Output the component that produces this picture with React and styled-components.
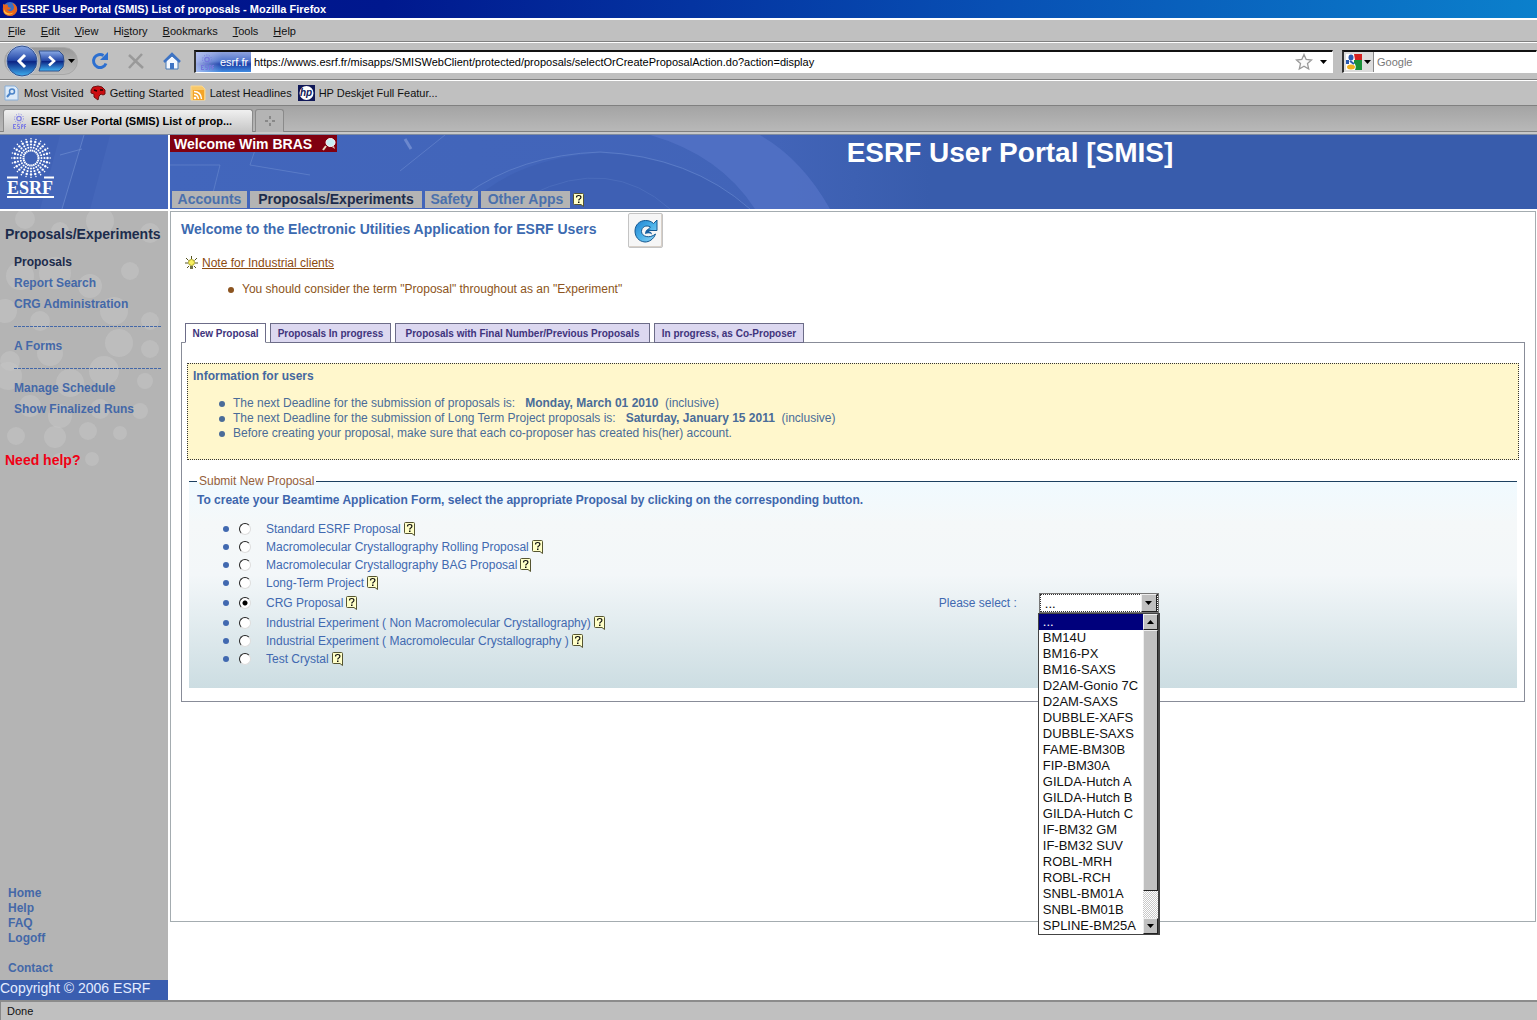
import React, { useState } from "react";
import styled, { createGlobalStyle, css } from "styled-components";

const Global = createGlobalStyle`
  * { box-sizing: border-box; }
  body { margin: 0; background: #fff; font-family: "Liberation Sans", Arial, sans-serif; font-size: 12px; color: #4169b0; }
  ul { list-style: none; margin: 0; padding: 0; }
  button, input, select { font-family: inherit; font-size: inherit; }
  button { border: 0; padding: 0; background: none; color: inherit; }
  a { color: inherit; text-decoration: none; }
  svg { display: block; flex: none; }
  p, h1, h2, h3 { margin: 0; }
`;

const Window = styled.div`
  display: flex;
  flex-direction: column;
  min-height: 100vh;
`;

/* ---------- browser chrome ---------- */

const TitleBar = styled.div`
  display: flex;
  align-items: center;
  gap: 2px;
  height: 18px;
  padding-left: 2px;
  background: linear-gradient(90deg, #00118a 0%, #00188e 25%, #0850b4 65%, #0b80cc 100%);
  color: #fff;
  font-size: 11px;
  font-weight: bold;
  white-space: nowrap;
`;

const bevel = css`
  border-top: 1px solid #fff;
  border-bottom: 1px solid #808080;
  background: #c0c0c0;
  color: #000;
  font-size: 11px;
`;

const MenuBar = styled.nav`
  ${bevel}
  display: flex;
  align-items: center;
  gap: 15px;
  height: 23px;
  margin-top: 1px;
  padding-left: 8px;
`;

const MenuItem = styled.button`
  color: #111;
`;

const NavBar = styled.div`
  ${bevel}
  display: flex;
  align-items: center;
  height: 38px;
  padding-left: 4px;
`;

const HistoryGroup = styled.div`
  display: flex;
  align-items: center;
  width: 74px;
  height: 28px;
  border-radius: 14px;
  background: linear-gradient(#999, #bbb);
  border: 1px solid #a8a8a8;
`;

const IconButton = styled.button`
  display: flex;
  align-items: center;
  justify-content: center;
  width: ${(p) => p.$w || 36}px;
  flex: none;
`;

const NavActions = styled.div`
  display: flex;
  margin-left: 4px;
`;

const Field = styled.div`
  display: flex;
  align-items: center;
  height: 23px;
  background: #fff;
  border: 1px solid #fff;
  border-top: 2px solid #111;
  border-left: 2px solid #333;
  flex: ${(p) => (p.$grow ? 1 : "0 0 195px")};
  margin-left: ${(p) => (p.$grow ? 4 : 9)}px;
  min-width: 0;
`;

const Identity = styled.button`
  display: flex;
  align-items: center;
  gap: 6px;
  height: 20px;
  width: 55px;
  padding-left: 4px;
  background: linear-gradient(90deg, rgba(190, 200, 245, 0.8) 0, rgba(190, 200, 245, 0) 26px),
    linear-gradient(#8fa3dc 0%, #4f74cc 45%, #1b3fa8 60%, #3f8be0 100%);
  color: #fff;
  flex: none;
`;

const AddressInput = styled.input`
  flex: 1;
  min-width: 0;
  height: 20px;
  padding: 0 3px;
  border: 0;
  outline: 0;
  background: transparent;
  color: #000;
  &::placeholder { color: #777; opacity: 1; }
`;

const EngineButton = styled.button`
  display: flex;
  align-items: center;
  justify-content: space-evenly;
  width: 30px;
  height: 20px;
  background: #dcdcdc;
  border-right: 1px solid #888;
  flex: none;
`;

const BookmarkBar = styled.div`
  ${bevel}
  display: flex;
  align-items: center;
  gap: 6px;
  height: 26px;
  padding-left: 4px;
`;

const Bookmark = styled.a`
  display: flex;
  align-items: center;
  gap: 4px;
  color: #111;
  white-space: nowrap;
`;

const TabStrip = styled.div`
  display: flex;
  align-items: flex-end;
  gap: 2px;
  height: 29px;
  padding: 0 0 3px 3px;
  background: linear-gradient(#a4a4a4 0, #b8b8b8 25px, #808080 25px, #808080 26px, #c8c8c8 26px, #c8c8c8 28px, #7f8ba0 28px);
`;

const BrowserTab = styled.button`
  display: flex;
  align-items: center;
  justify-content: ${(p) => (p.$active ? "flex-start" : "center")};
  gap: 5px;
  height: 23px;
  width: ${(p) => p.$w}px;
  padding: 0 8px;
  border: 1px solid #8a8a8a;
  border-bottom: 0;
  border-radius: 3px 3px 0 0;
  background: ${(p) => (p.$active ? "linear-gradient(#f0f0f0, #c6c6c6)" : "#b4b4b4")};
  color: #000;
  font-size: 11px;
  font-weight: bold;
  white-space: nowrap;
`;

const StatusBar = styled.footer`
  display: flex;
  align-items: center;
  height: 20px;
  padding-left: 6px;
  border-top: 2px solid #8c8c8c;
  border-left: 1px solid #888;
  background: #c0c0c0;
  color: #111;
  font-size: 11px;
`;

/* ---------- portal ---------- */

const Portal = styled.div`
  flex: 1;
  display: grid;
  grid-template-columns: 168px minmax(0, 1fr);
  grid-template-rows: 74px 1fr;
  column-gap: 2px;
  row-gap: 2px;
`;

const Backdrop = styled.svg`
  position: absolute;
  inset: 0;
  z-index: 0;
`;

const LogoCell = styled.div`
  position: relative;
  background: #4062b6;
  padding: 2px 0 0 6px;
  overflow: hidden;
  & > svg:last-child { position: relative; }
`;

const Header = styled.header`
  position: relative;
  display: flex;
  flex-direction: column;
  justify-content: space-between;
  background: #385cac;
  overflow: hidden;
`;

const HeaderTop = styled.div`
  position: relative;
  display: flex;
  align-items: flex-start;
`;

const BadgeCell = styled.div`
  width: 313px;
  flex: none;
`;

const Badge = styled.div`
  display: flex;
  align-items: center;
  justify-content: space-between;
  width: 167px;
  height: 17px;
  padding: 0 1px 0 4px;
  background: #800010;
  color: #fff;
  font-size: 14px;
  line-height: 16px;
  font-weight: bold;
`;

const PortalTitle = styled.h1`
  flex: 1;
  text-align: center;
  color: #fff;
  font-size: 28px;
  line-height: 36px;
`;

const AppTabs = styled.nav`
  position: relative;
  display: flex;
  align-items: center;
  gap: 3px;
  padding: 0 0 1px 2px;
`;

const AppTab = styled.a`
  width: ${(p) => p.$w}px;
  height: 17px;
  line-height: 17px;
  text-align: center;
  background: #b4b4b4;
  color: ${(p) => (p.$active ? "#1c2c4c" : "#4a70ac")};
  font-size: 14px;
  font-weight: bold;
`;

const Sidebar = styled.aside`
  position: relative;
  display: flex;
  flex-direction: column;
  background: #b4b4b4;
  font-weight: bold;
  overflow: hidden;
`;

const SideTitle = styled.h2`
  position: relative;
  padding: 14px 0 0 5px;
  font-size: 14px;
  line-height: 18px;
  color: ${(p) => (p.$alert ? "#f00014" : "#1c2c4c")};
`;

const SideList = styled.ul`
  position: relative;
  padding: ${(p) => (p.$compact ? "0 0 4px 8px" : "9px 6px 17px 14px")};
  margin-top: ${(p) => (p.$compact ? "auto" : 0)};
  line-height: ${(p) => (p.$compact ? 15 : 21)}px;
`;

const SideItem = styled.li`
  color: ${(p) => (p.$active ? "#1c2c4c" : "#4468a8")};
  padding-top: ${(p) => (p.$apart ? 15 : 0)}px;
`;

const SideRule = styled.li`
  height: 21px;
  padding-top: 11px;
  &::after {
    content: "";
    display: block;
    height: 1px;
    background: repeating-linear-gradient(90deg, #4468a8 0 3px, transparent 3px 4px);
  }
`;

const Copyright = styled.p`
  background: #3a5eb0;
  color: #e4ecff;
  font-size: 14px;
  line-height: 17px;
  height: 20px;
  font-weight: normal;
`;

const Content = styled.main`
  margin: 0 1px 78px 0;
  padding: 0 10px;
  border: 1px solid #a4acb0;
`;

const WelcomeRow = styled.div`
  display: flex;
  align-items: flex-start;
  gap: 14px;
  height: 36px;
  padding-top: 1px;
`;

const Heading = styled.h2`
  min-width: 433px;
  color: #3c6ab0;
  font-size: 14px;
  line-height: 33px;
`;

const ReloadButton = styled.button`
  display: flex;
  align-items: center;
  justify-content: center;
  width: 35px;
  height: 35px;
  border: 1px solid #c4c4c4;
  border-radius: 2px;
  background: #f6f6f6;
  box-shadow: inset -1px -1px 0 #d8d0c8;
`;

const NoteLink = styled.a`
  display: flex;
  align-items: center;
  gap: 4px;
  padding: 8px 0 0 4px;
  color: #8c4a10;
  line-height: 14px;
  span { text-decoration: underline; }
`;

const Bullets = styled.ul`
  padding: ${(p) => p.$pad};
  line-height: 15px;
  color: ${(p) => p.$color};
`;

const Bullet = styled.li`
  display: flex;
  align-items: center;
  white-space: pre;
  &::before {
    content: "";
    width: 6px;
    height: 6px;
    margin-right: 8px;
    border-radius: 3px;
    background: currentColor;
    flex: none;
  }
`;

const ProposalTabs = styled.div`
  display: flex;
  gap: 4px;
  padding: 26px 0 0 4px;
`;

const ProposalTab = styled.button`
  width: ${(p) => p.$w}px;
  height: 20px;
  margin-bottom: -1px;
  border: 1px solid #6c6c88;
  border-bottom-color: ${(p) => (p.$active ? "#fff" : "#6c6c88")};
  background: ${(p) => (p.$active ? "#fff" : "#dcd8f0")};
  color: #40347c;
  font-size: 10px;
  font-weight: bold;
  white-space: nowrap;
  z-index: 1;
`;

const TabPanel = styled.section`
  padding: 20px 5px 13px;
  border: 1px solid #888c98;
`;

const InfoBox = styled.div`
  height: 97px;
  padding: 5px;
  border: 1px dotted #333;
  background: #fff7cc;
  color: #4468a0;
`;

const InfoTitle = styled.h3`
  font-size: 12px;
  line-height: 15px;
`;

const Submit = styled.fieldset`
  min-width: 0;
  margin: 14px 2px 0;
  padding: 5px 0 20px 8px;
  border: 0;
  border-top: 1px solid #1c4060;
  background: linear-gradient(#f0faff 0, #f5f8f9 20%, #f3f7f9 45%, #ccdde2 100%);
`;

const Legend = styled.legend`
  padding: 0 2px;
  color: #95603a;
  line-height: 14px;
`;

const Lead = styled.p`
  margin-bottom: 12px;
  font-weight: bold;
  line-height: 15px;
  color: #3e66ac;
`;

const Choice = styled.li`
  display: grid;
  grid-template-columns: minmax(0, 749fr) minmax(0, 605fr);
  align-items: center;
  height: ${(p) => (p.$tall ? 22 : 18)}px;
  padding-left: 26px;
`;

const ChoiceMain = styled.div`
  display: flex;
  align-items: center;
  gap: 3px;
  white-space: nowrap;
  &::before {
    content: "";
    width: 6px;
    height: 6px;
    margin-right: 7px;
    border-radius: 3px;
    background: currentColor;
    flex: none;
  }
`;

const ChoiceLabel = styled.label`
  display: flex;
  align-items: center;
  gap: 15px;
`;

const Radio = styled.input.attrs({ type: "radio" })`
  appearance: none;
  width: 12px;
  height: 12px;
  margin: 0;
  border: 1px solid;
  border-color: #222 #ddd #ddd #222;
  border-radius: 6px;
  background: #fff;
  &:checked { background: radial-gradient(circle, #000 0 2px, #fff 3px); }
`;

const SelectArea = styled.div`
  display: flex;
  align-items: center;
`;

const SelectLabel = styled.label`
  width: 100px;
  flex: none;
`;

const Combo = styled.div`
  position: relative;
  width: 120px;
`;

const ComboSelect = styled.select`
  appearance: none;
  display: block;
  width: 120px;
  height: 20px;
  padding: 0 20px 0 5px;
  border: 1px solid #777;
  border-radius: 0;
  outline: 1px dotted #333;
  outline-offset: -2px;
  background: #fff;
  color: #000;
  font-size: 13px;
`;

const Win = css`
  display: flex;
  align-items: center;
  justify-content: center;
  width: 16px;
  border: 1px solid;
  border-color: #eee #222 #222 #eee;
  background: #c0c0c0;
`;

const ComboArrow = styled.span`
  ${Win}
  position: absolute;
  right: 2px;
  top: 1px;
  height: 18px;
  pointer-events: none;
`;

const Popup = styled.div`
  position: absolute;
  z-index: 5;
  top: 20px;
  left: -1px;
  display: flex;
  width: 122px;
  height: 322px;
  border: 1px solid #444;
  border-right-width: 2px;
  background: #fff;
`;

const Options = styled.ul`
  flex: 1;
  overflow: hidden;
  font-size: 13px;
  line-height: 16px;
  color: #111;
`;

const Option = styled.li`
  height: 16px;
  padding-left: 4px;
  white-space: nowrap;
  background: ${(p) => (p.$on ? "#00007c" : "#fff")};
  color: ${(p) => (p.$on ? "#fff" : "#111")};
`;

const ScrollBar = styled.div`
  display: flex;
  flex-direction: column;
  width: 15px;
  background: repeating-conic-gradient(#fff 0 25%, #c8c8c8 0 50%) 0 0 / 2px 2px;
`;

const ScrollButton = styled.button`
  ${Win}
  width: 15px;
  height: 16px;
  flex: none;
`;

const ScrollTrack = styled.div`
  flex: 1;
`;

const ScrollThumb = styled.div`
  height: 261px;
  border: 1px solid;
  border-color: #eee #222 #222 #eee;
  background: #c0c0c0;
`;

/* ---------- drawings ---------- */

const Arrow = ({ up }) => (
  <svg width="7" height="4" viewBox="0 0 7 4" aria-hidden="true">
    <path d={up ? "M0 4h7L3.500 0z" : "M0 0h7L3.500 4z"} fill="#000" />
  </svg>
);

const FirefoxIcon = () => (
  <svg width="16" height="16" viewBox="0 0 16 16">
    <circle cx="8" cy="8" r="7" fill="#3c6fc4" />
    <path d="M1 3c2 1 3 0 5 1-1 2 1 2 3 3-1 2-3 2-4 1 1 3 6 3 7-1 0-2-1-4-2-5 4 1 6 5 5 8-1 3-4 5-7 5-5 0-8-4-7-9z" fill="#e8641c" />
    <path d="M2 7c0 5 6 7 10 4-2 3-8 4-10 0z" fill="#ffc040" />
  </svg>
);

const EsrfIcon = ({ tone = "#8080e4" }) => (
  <svg width="14" height="16" viewBox="0 0 14 16" fill="none" stroke={tone}>
    <circle cx="7" cy="5.500" r="2.200" strokeWidth="1.300" />
    <circle cx="7" cy="5.500" r="4.500" strokeDasharray="1 1.500" />
    <path d="M1.500 11v5M1 11.500h3M1 13.500h2M1 15.500h3M7.500 11.500h-2v2h2v2h-2M9.500 16v-4.500h1.500v2h-1.500M12.500 16v-4.500H14M12.500 13.500H14" />
  </svg>
);

const BackIcon = () => (
  <svg width="34" height="34" viewBox="0 0 34 34">
    <defs>
      <linearGradient id="orb" x1="0" y1="0" x2="0" y2="1">
        <stop offset="0" stopColor="#8cace8" />
        <stop offset=".48" stopColor="#2448a8" />
        <stop offset=".52" stopColor="#0c2484" />
        <stop offset="1" stopColor="#40b4f4" />
      </linearGradient>
    </defs>
    <circle cx="17" cy="17" r="15.500" fill="url(#orb)" stroke="#e0e4f0" />
    <circle cx="17" cy="17" r="15" fill="none" stroke="#31508c" />
    <path d="M20 11l-6 6 6 6" fill="none" stroke="#fff" strokeWidth="3" />
  </svg>
);

const ForwardIcon = () => (
  <svg width="28" height="22" viewBox="0 0 28 22">
    <path d="M1 1h20l4 4q2 6 0 12l-4 4H1q4-10 0-20z" fill="url(#orb)" stroke="#31508c" />
    <path d="M11 6.500l5 4.500-5 4.500" fill="none" stroke="#fff" strokeWidth="2.500" />
  </svg>
);

const ReloadIcon = () => (
  <svg width="20" height="20" viewBox="0 0 20 20">
    <path d="M16 12.500A6.500 6.500 0 1 1 13.500 4.500" fill="none" stroke="#2c6fd0" strokeWidth="3" />
    <path d="M18 1v8h-8z" fill="#2c6fd0" />
  </svg>
);

const StopIcon = () => (
  <svg width="18" height="18" viewBox="0 0 18 18">
    <path d="M2 3l14 13M15 2L2 16" stroke="#999" strokeWidth="2.500" />
  </svg>
);

const HomeIcon = () => (
  <svg width="18" height="18" viewBox="0 0 18 18">
    <path d="M3 9v8h12V9L9 4z" fill="#f4f8ff" stroke="#4478b8" />
    <path d="M1 10l8-8 8 8" fill="none" stroke="#3f74c4" strokeWidth="2.500" />
    <path d="M7 11h4v6H7z" fill="#3f74c4" />
  </svg>
);

const StarIcon = () => (
  <svg width="18" height="18" viewBox="0 0 18 18">
    <path d="M9 1.500l2.200 5 5.300.5-4 3.600 1.200 5.400L9 13.200 4.300 16l1.200-5.400-4-3.600 5.300-.5z" fill="#fafafa" stroke="#999" strokeWidth="1.300" />
  </svg>
);

const GoogleIcon = () => (
  <svg width="16" height="16" viewBox="0 0 16 16">
    <path d="M0 0h16v16H0z" fill="#fff" />
    <path d="M8 0h8v6H9z" fill="#d42020" />
    <path d="M8 6h8v10H9q2-4-1-7z" fill="#189038" />
    <path d="M0 6h3v4H0z" fill="#2858b0" />
    <ellipse cx="5" cy="3.500" rx="2.500" ry="3" fill="#2858b0" />
    <ellipse cx="5" cy="13" rx="4" ry="2.500" fill="#f0b020" />
    <path d="M4 7l4 3" stroke="#2858b0" strokeWidth="2" />
  </svg>
);

const VisitedIcon = () => (
  <svg width="16" height="16" viewBox="0 0 16 16">
    <path d="M1 1h10l3 3v11H1z" fill="#dceaf8" stroke="#88aed8" />
    <circle cx="8" cy="6.500" r="2.500" fill="none" stroke="#4c84c8" strokeWidth="1.500" />
    <path d="M6 8.500L3 12" stroke="#4c84c8" strokeWidth="2" />
  </svg>
);

const StartedIcon = () => (
  <svg width="16" height="16" viewBox="0 0 16 16">
    <path d="M1 5l2-3 5-1 4 1 3 3v4l-2 1-2-1-2 2-1 4-4-3 0-3-3-1z" fill="#cc0c10" stroke="#701010" />
    <path d="M10 5h3M4 5l3 1" stroke="#200" strokeWidth="1.500" />
  </svg>
);

const FeedIcon = () => (
  <svg width="16" height="16" viewBox="0 0 16 16">
    <path d="M1 1h11l3 3v11H1z" fill="#f8c868" stroke="#fcd890" />
    <path d="M3 5h11v10H3z" fill="#f4a428" />
    <circle cx="5" cy="13" r="1.300" fill="#fff" />
    <path d="M4 9.500q4 0 4.500 4.500M4 6.500q7 0 7.500 7.500" stroke="#fff" strokeWidth="1.400" fill="none" />
  </svg>
);

const HpIcon = () => (
  <svg width="17" height="16" viewBox="0 0 17 16">
    <path d="M0 0h17v16H0z" fill="#101858" />
    <circle cx="8.500" cy="8" r="7" fill="#fff" />
    <text x="8" y="11" textAnchor="middle" fontSize="10" fontStyle="italic" fontWeight="bold" fill="#101858">hp</text>
  </svg>
);

const RacketIcon = () => (
  <svg width="14" height="14" viewBox="0 0 14 14">
    <path d="M1 13l3-4" stroke="#e8d8c0" strokeWidth="2" />
    <ellipse cx="8.500" cy="5.500" rx="4.500" ry="4" fill="#c8f0f4" stroke="#fff" />
    <path d="M12 9l1 3-3-2" fill="#e0d0c0" />
  </svg>
);

const BulbIcon = () => (
  <svg width="13" height="14" viewBox="0 0 13 14">
    <path d="M6.500 0v3M1 2l2.500 2.500M12 2L9.500 4.500M0 7h3M13 7h-3M2 12l2-2M11 12l-2-2" stroke="#555420" />
    <circle cx="6.500" cy="6.500" r="3" fill="#f8f060" stroke="#a8a020" />
    <path d="M5 10h3v3H5z" fill="#707048" />
  </svg>
);

const HelpTip = ({ topic }) => (
  <IconButton $w={12} type="button" aria-label={`Help: ${topic}`}>
    <svg width="12" height="14" viewBox="0 0 12 14">
      <path d="M1.500.500h8q1 0 1 1v12l-2.500-2h-6.500q-1 0-1-1v-9q0-1 1-1z" fill="#ffffc8" stroke="#555430" />
      <path d="M3.500 4.500q0-2 2.200-2t2.200 1.800q0 1.200-1.200 1.700-.9.400-.9 1.600" fill="none" stroke="#111" strokeWidth="1.200" />
      <path d="M5 8.500h1.500V10H5z" fill="#111" />
    </svg>
  </IconButton>
);

const RefreshArt = () => (
  <svg width="26" height="26" viewBox="0 0 26 26">
    <defs>
      <linearGradient id="swirl" x1="0" y1="0" x2="1" y2="1">
        <stop offset="0" stopColor="#2080d0" />
        <stop offset=".5" stopColor="#48b0e8" />
        <stop offset="1" stopColor="#98d8f8" />
      </linearGradient>
    </defs>
    <path d="M24 2v10.500H14l3.500-3.500C13 6.500 8.500 9 8.500 13.500c0 5 8 7.500 14 2.500-2 5.500-6.500 8-10.500 8C5.500 23.500 2 18.500 2 13 2 7 6.500 2.500 12.500 2.500c3.500 0 6 1 8 3z" fill="url(#swirl)" stroke="#145890" />
    <path d="M12 16c0-4 3-6 6-4l-2 1.500c1.500 0 3 1 3 3-2-1.500-4-1.500-7-.5z" fill="#1860a0" />
  </svg>
);

const spokes = Array.from({ length: 24 }, (_, i) => (i * Math.PI) / 12);

const EsrfLogo = () => (
  <svg width="50" height="62" viewBox="0 0 50 62" role="img" aria-label="ESRF">
    <circle cx="25" cy="21" r="7.500" fill="none" stroke="#fff" strokeWidth="2" strokeDasharray="1.500 .5" />
    {spokes.map((a) =>
      [10.5, 13.5, 16.5, 19.2].map((r, k) => (
        <circle
          key={`${a}-${r}`}
          cx={25 + r * Math.cos(a)}
          cy={21 + r * Math.sin(a)}
          r={[1, 1.1, 1.2, 0.8][k]}
          fill="#fff"
        />
      ))
    )}
    <path d="M1 40.500h11M38 40.500h10M1 60h47" stroke="#fff" strokeWidth="2" />
    <text x="1" y="57" fontFamily="Liberation Serif, serif" fontSize="18" fontWeight="bold" fill="#fff">ESRF</text>
  </svg>
);

const LogoArt = () => (
  <Backdrop width="168" height="74" viewBox="0 0 168 74" aria-hidden="true">
    <path d="M60 0h24L62 74H40zM110 0h58v74H90z" fill="#4a6cbe" opacity=".5" />
    <path d="M84 0L62 74M60 20l22-6" stroke="#6c8cd0" fill="none" opacity=".7" />
  </Backdrop>
);

const HeaderArt = () => (
  <Backdrop width="760" height="74" viewBox="0 0 760 74" aria-hidden="true">
    <defs>
      <linearGradient id="fade" x1="0" x2="1">
        <stop offset="0" stopColor="#4266bc" />
        <stop offset=".8" stopColor="#4264b8" />
        <stop offset="1" stopColor="#385cac" />
      </linearGradient>
    </defs>
    <path d="M0 0h760v74H0z" fill="url(#fade)" />
    <path d="M295 74Q340 24 430 18q90 4 150 56z" fill="#3e60b4" />
    <path d="M590 0q42 24 70 74h-75Q550 20 480 0z" fill="#5272c6" opacity=".8" />
    <path d="M360 60Q440 20 500 74" fill="none" stroke="#4a6cbc" />
    <path d="M230 36L275 0M0 30h50l-10 40M90 0l-10 30 60 10M295 60Q350 20 430 17q90 4 150 57" fill="none" stroke="#6484cc" opacity=".7" />
    <path d="M235 4l6 10" stroke="#88a0dc" strokeWidth="3" opacity=".6" />
  </Backdrop>
);

const dots = [
  [25, 8, 10], [60, 20, 9], [100, 10, 14], [150, 22, 10], [20, 65, 14], [55, 62, 16], [90, 75, 12], [130, 60, 9],
  [5, 100, 12], [40, 110, 10], [114, 100, 14], [150, 110, 9], [10, 150, 10], [50, 142, 13], [119, 132, 14], [150, 138, 9],
  [8, 165, 14], [104, 160, 15], [70, 172, 14], [145, 170, 8], [30, 195, 11], [60, 205, 12], [100, 198, 10], [140, 200, 8],
  [16, 225, 9], [55, 226, 11], [88, 220, 9], [120, 222, 7], [60, 250, 8], [92, 248, 7],
];

const DotsArt = () => (
  <Backdrop width="168" height="270" viewBox="0 0 168 270" aria-hidden="true">
    {dots.map(([x, y, r]) => (
      <circle key={`${x}-${y}`} cx={x} cy={y} r={r} fill="#c4c4c4" opacity=".55" />
    ))}
  </Backdrop>
);

/* ---------- data ---------- */

const menus = [["", "F", "ile"], ["", "E", "dit"], ["", "V", "iew"], ["Hi", "s", "tory"], ["", "B", "ookmarks"], ["", "T", "ools"], ["", "H", "elp"]];

const choices = [
  "Standard ESRF Proposal",
  "Macromolecular Crystallography Rolling Proposal",
  "Macromolecular Crystallography BAG Proposal",
  "Long-Term Project",
  "CRG Proposal",
  "Industrial Experiment ( Non Macromolecular Crystallography)",
  "Industrial Experiment ( Macromolecular Crystallography )",
  "Test Crystal",
];

const beamlines = [
  "...", "BM14U", "BM16-PX", "BM16-SAXS", "D2AM-Gonio 7C", "D2AM-SAXS", "DUBBLE-XAFS", "DUBBLE-SAXS", "FAME-BM30B",
  "FIP-BM30A", "GILDA-Hutch A", "GILDA-Hutch B", "GILDA-Hutch C", "IF-BM32 GM", "IF-BM32 SUV", "ROBL-MRH", "ROBL-RCH",
  "SNBL-BM01A", "SNBL-BM01B", "SPLINE-BM25A",
];

const proposalTabs = [
  { name: "New Proposal", width: 81 },
  { name: "Proposals In progress", width: 121 },
  { name: "Proposals with Final Number/Previous Proposals", width: 255 },
  { name: "In progress, as Co-Proposer", width: 150 },
];

function BeamlinePicker() {
  const [value, setValue] = useState("...");
  return (
    <SelectArea>
      <SelectLabel htmlFor="beamline">Please select :</SelectLabel>
      <Combo>
        <ComboSelect id="beamline" value={value} onChange={(e) => setValue(e.target.value)}>
          {beamlines.map((b) => <option key={b}>{b}</option>)}
        </ComboSelect>
        <ComboArrow><Arrow /></ComboArrow>
        <Popup>
          <Options role="listbox" aria-label="Beamlines">
            {beamlines.map((b) => (
              <Option key={b} role="option" aria-selected={b === value} $on={b === value} onClick={() => setValue(b)}>
                {b}
              </Option>
            ))}
          </Options>
          <ScrollBar>
            <ScrollButton type="button" aria-label="Scroll up"><Arrow up /></ScrollButton>
            <ScrollTrack><ScrollThumb /></ScrollTrack>
            <ScrollButton type="button" aria-label="Scroll down"><Arrow /></ScrollButton>
          </ScrollBar>
        </Popup>
      </Combo>
    </SelectArea>
  );
}

export default function App() {
  const [choice, setChoice] = useState("CRG Proposal");
  const [tab, setTab] = useState("New Proposal");
  return (
    <Window>
      <Global />
      <TitleBar><FirefoxIcon />ESRF User Portal (SMIS) List of proposals - Mozilla Firefox</TitleBar>
      <MenuBar>
        {menus.map(([before, key, after]) => (
          <MenuItem key={key + after}>{before}<u>{key}</u>{after}</MenuItem>
        ))}
      </MenuBar>
      <NavBar>
        <HistoryGroup>
          <IconButton $w={33} aria-label="Back"><BackIcon /></IconButton>
          <IconButton $w={27} aria-label="Forward"><ForwardIcon /></IconButton>
          <IconButton $w={12} aria-label="Recent pages"><Arrow /></IconButton>
        </HistoryGroup>
        <NavActions>
          <IconButton aria-label="Reload"><ReloadIcon /></IconButton>
          <IconButton aria-label="Stop"><StopIcon /></IconButton>
          <IconButton aria-label="Home"><HomeIcon /></IconButton>
        </NavActions>
        <Field $grow>
          <Identity><EsrfIcon tone="#7478dc" />esrf.fr</Identity>
          <AddressInput
            aria-label="Address"
            defaultValue="https://wwws.esrf.fr/misapps/SMISWebClient/protected/proposals/selectOrCreateProposalAction.do?action=display"
          />
          <IconButton $w={20} aria-label="Bookmark this page"><StarIcon /></IconButton>
          <IconButton $w={18} aria-label="Show history"><Arrow /></IconButton>
        </Field>
        <Field>
          <EngineButton aria-label="Search engine"><GoogleIcon /><Arrow /></EngineButton>
          <AddressInput aria-label="Search" placeholder="Google" />
        </Field>
      </NavBar>
      <BookmarkBar>
        <Bookmark href="#"><VisitedIcon />Most Visited</Bookmark>
        <Bookmark href="#"><StartedIcon />Getting Started</Bookmark>
        <Bookmark href="#"><FeedIcon />Latest Headlines</Bookmark>
        <Bookmark href="#"><HpIcon />HP Deskjet Full Featur...</Bookmark>
      </BookmarkBar>
      <TabStrip>
        <BrowserTab $active $w={250}><EsrfIcon />ESRF User Portal (SMIS) List of prop...</BrowserTab>
        <BrowserTab $w={29} aria-label="New tab">
          <svg width="10" height="10" viewBox="0 0 10 10"><path d="M5 0v3M5 7v3M0 5h3M7 5h3" stroke="#888" strokeWidth="2" /></svg>
        </BrowserTab>
      </TabStrip>

      <Portal>
        <LogoCell><LogoArt /><EsrfLogo /></LogoCell>
        <Header>
          <HeaderArt />
          <HeaderTop>
            <BadgeCell><Badge>Welcome Wim BRAS<RacketIcon /></Badge></BadgeCell>
            <PortalTitle>ESRF User Portal [SMIS]</PortalTitle>
          </HeaderTop>
          <AppTabs>
            <AppTab href="#" $w={75}>Accounts</AppTab>
            <AppTab href="#" $w={172} $active>Proposals/Experiments</AppTab>
            <AppTab href="#" $w={53}>Safety</AppTab>
            <AppTab href="#" $w={89}>Other Apps</AppTab>
            <HelpTip topic="applications" />
          </AppTabs>
        </Header>

        <Sidebar>
          <DotsArt />
          <SideTitle>Proposals/Experiments</SideTitle>
          <SideList>
            <SideItem $active><a href="#">Proposals</a></SideItem>
            <SideItem><a href="#">Report Search</a></SideItem>
            <SideItem><a href="#">CRG Administration</a></SideItem>
            <SideRule />
            <SideItem><a href="#">A Forms</a></SideItem>
            <SideRule />
            <SideItem><a href="#">Manage Schedule</a></SideItem>
            <SideItem><a href="#">Show Finalized Runs</a></SideItem>
          </SideList>
          <SideTitle $alert><a href="#">Need help?</a></SideTitle>
          <SideList $compact>
            <SideItem><a href="#">Home</a></SideItem>
            <SideItem><a href="#">Help</a></SideItem>
            <SideItem><a href="#">FAQ</a></SideItem>
            <SideItem><a href="#">Logoff</a></SideItem>
            <SideItem $apart><a href="#">Contact</a></SideItem>
          </SideList>
          <Copyright>Copyright © 2006 ESRF</Copyright>
        </Sidebar>

        <Content>
          <WelcomeRow>
            <Heading>Welcome to the Electronic Utilities Application for ESRF Users</Heading>
            <ReloadButton aria-label="Refresh"><RefreshArt /></ReloadButton>
          </WelcomeRow>
          <NoteLink href="#"><BulbIcon /><span>Note for Industrial clients</span></NoteLink>
          <Bullets $pad="12px 0 0 47px" $color="#8c5420">
            <Bullet>You should consider the term "Proposal" throughout as an "Experiment"</Bullet>
          </Bullets>
          <ProposalTabs role="tablist">
            {proposalTabs.map(({ name, width }) => (
              <ProposalTab key={name} role="tab" aria-selected={name === tab} $w={width} $active={name === tab} onClick={() => setTab(name)}>
                {name}
              </ProposalTab>
            ))}
          </ProposalTabs>
          <TabPanel>
            <InfoBox>
              <InfoTitle>Information for users</InfoTitle>
              <Bullets $pad="12px 0 0 26px" $color="#4a6c98">
                <Bullet>The next Deadline for the submission of proposals is:   <b>Monday, March 01 2010</b>  (inclusive)</Bullet>
                <Bullet>The next Deadline for the submission of Long Term Project proposals is:   <b>Saturday, January 15 2011</b>  (inclusive)</Bullet>
                <Bullet>Before creating your proposal, make sure that each co-proposer has created his(her) account.</Bullet>
              </Bullets>
            </InfoBox>
            <Submit>
              <Legend>Submit New Proposal</Legend>
              <Lead>To create your Beamtime Application Form, select the appropriate Proposal by clicking on the corresponding button.</Lead>
              <ul>
                {choices.map((c) => (
                  <Choice key={c} $tall={c === "CRG Proposal"}>
                    <ChoiceMain>
                      <ChoiceLabel>
                        <Radio name="proposal" checked={choice === c} onChange={() => setChoice(c)} />
                        {c}
                      </ChoiceLabel>
                      <HelpTip topic={c} />
                    </ChoiceMain>
                    {c === "CRG Proposal" && <BeamlinePicker />}
                  </Choice>
                ))}
              </ul>
            </Submit>
          </TabPanel>
        </Content>
      </Portal>
      <StatusBar>Done</StatusBar>
    </Window>
  );
}
